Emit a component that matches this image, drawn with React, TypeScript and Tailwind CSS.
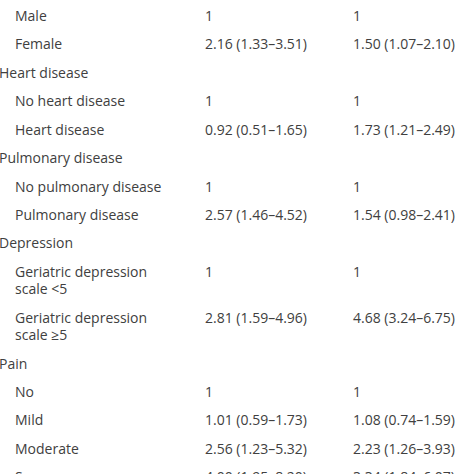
type Row = {
  label: string
  a?: string
  b?: string
  group?: boolean
}

const rows: Row[] = [
  { label: 'Male', a: '1', b: '1' },
  { label: 'Female', a: '2.16 (1.33–3.51)', b: '1.50 (1.07–2.10)' },
  { label: 'Heart disease', group: true },
  { label: 'No heart disease', a: '1', b: '1' },
  { label: 'Heart disease', a: '0.92 (0.51–1.65)', b: '1.73 (1.21–2.49)' },
  { label: 'Pulmonary disease', group: true },
  { label: 'No pulmonary disease', a: '1', b: '1' },
  { label: 'Pulmonary disease', a: '2.57 (1.46–4.52)', b: '1.54 (0.98–2.41)' },
  { label: 'Depression', group: true },
  { label: 'Geriatric depression scale <5', a: '1', b: '1' },
  { label: 'Geriatric depression scale ≥5', a: '2.81 (1.59–4.96)', b: '4.68 (3.24–6.75)' },
  { label: 'Pain', group: true },
  { label: 'No', a: '1', b: '1' },
  { label: 'Mild', a: '1.01 (0.59–1.73)', b: '1.08 (0.74–1.59)' },
  { label: 'Moderate', a: '2.56 (1.23–5.32)', b: '2.23 (1.26–3.93)' },
  { label: 'Severe', a: '4.00 (1.95–8.20)', b: '3.34 (1.84–6.07)' },
]

export default function App() {
  return (
    <div
      className="h-[474px] w-[474px] overflow-hidden bg-white pt-[1px] text-[14px] leading-[17.3px] text-[#404040]"
      style={{ fontFamily: '"Open Sans", "Liberation Sans", sans-serif' }}
    >
      <div className="-ml-[1px] grid grid-cols-[206px_148px_1fr]">
        {rows.map((r, i) =>
          r.group ? (
            <div key={i} className="col-span-3 py-[5.6px]">
              {r.label}
            </div>
          ) : (
            <div key={i} className="col-span-3 grid grid-cols-subgrid py-[5.6px]">
              <div className="max-w-[170px] pl-[16px]">{r.label}</div>
              <div className="whitespace-nowrap">{r.a}</div>
              <div className="whitespace-nowrap">{r.b}</div>
            </div>
          ),
        )}
      </div>
    </div>
  )
}
